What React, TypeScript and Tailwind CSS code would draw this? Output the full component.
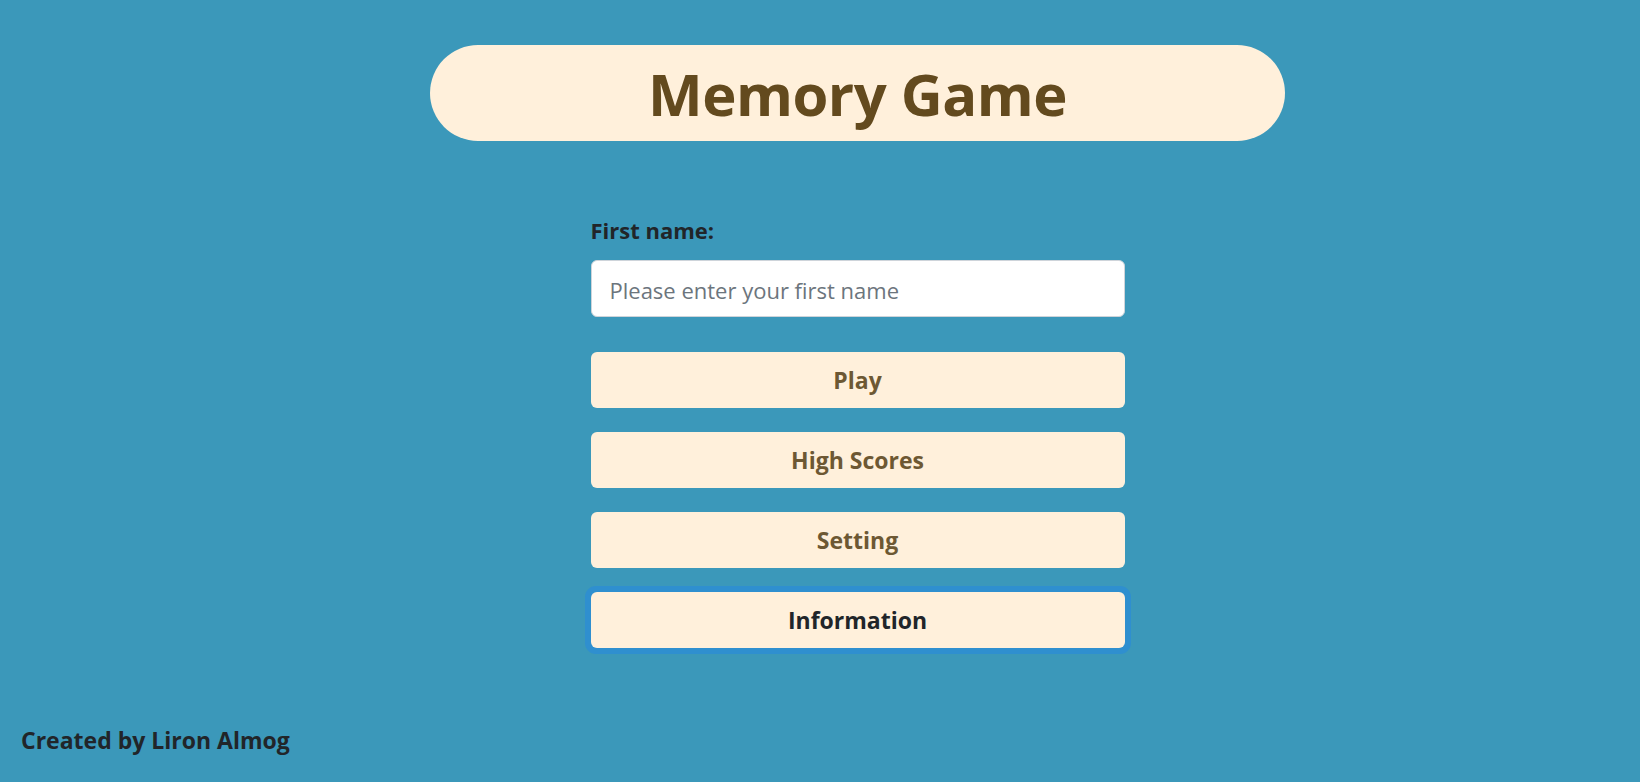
import React from "react";

const menu = ["Play", "High Scores", "Setting"];

export default function App() {
  return (
    <div
      className="relative min-h-screen w-full bg-[#3b98ba] text-[#212529]"
      style={{ fontFamily: '"Open Sans", "Noto Sans", sans-serif' }}
    >
      <div className="flex flex-col items-center pl-[75px] pt-[45px]">
        <header className="flex h-[96px] w-[855px] items-center justify-center rounded-full bg-[#fff0db]">
          <h1 className="pt-[2px] text-[58px] font-bold leading-none tracking-[-0.5px] text-[#634a1e]">
            Memory Game
          </h1>
        </header>

        <form className="mt-[73px] flex w-[534px] flex-col" onSubmit={(e) => e.preventDefault()}>
          <label htmlFor="firstName" className="mb-[14px] text-[22px] font-bold leading-[32px]">
            First name:
          </label>
          <input
            id="firstName"
            type="text"
            placeholder="Please enter your first name"
            className="h-[57px] w-full rounded-[6px] border border-[#ced4da] bg-white px-[18px] pt-[2px] text-[22px] text-[#212529] outline-none placeholder:text-[#6c757d]"
          />

          <div className="mt-[35px] flex flex-col gap-[24px]">
            {menu.map((item) => (
              <button
                key={item}
                type="button"
                className="h-[56px] w-full rounded-[6px] bg-[#fff0db] text-[23px] font-bold text-[#6d5833]"
              >
                {item}
              </button>
            ))}
            {/* focused button: blue focus halo around it */}
            <div className="-mx-[6px] -my-[6px] rounded-[11px] bg-[#2f8fcf] p-[6px]">
              <button
                type="button"
                className="block h-[56px] w-full rounded-[6px] bg-[#fff0db] text-[23px] font-bold text-[#212529] outline-none"
              >
                Information
              </button>
            </div>
          </div>
        </form>
      </div>

      <footer className="absolute bottom-[27px] left-[21px] text-[23px] font-bold leading-[30px]">
        Created by Liron Almog
      </footer>
    </div>
  );
}
